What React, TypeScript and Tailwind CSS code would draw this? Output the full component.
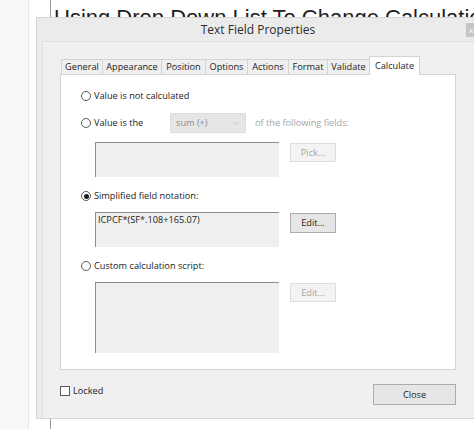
import { ChevronDown } from "lucide-react";

const tabs = [
  { label: "General", w: "w-[42px]" },
  { label: "Appearance", w: "w-[60px]" },
  { label: "Position", w: "w-[45px]" },
  { label: "Options", w: "w-[43px]" },
  { label: "Actions", w: "w-[42px]" },
  { label: "Format", w: "w-[40px]" },
  { label: "Validate", w: "w-[43px]" },
];

function Radio({ checked, label }: { checked?: boolean; label: string }) {
  return (
    <div className="flex items-center h-[16px]">
      <span className="w-[10px] h-[10px] rounded-full border border-[#5b5b5b] bg-white flex items-center justify-center">
        {checked && <span className="w-[5px] h-[5px] rounded-full bg-[#1b1b1b]" />}
      </span>
      <span className="ml-[3px] text-[#1b1b1b]">{label}</span>
    </div>
  );
}

function Box({ h, children }: { h: string; children?: React.ReactNode }) {
  return (
    <div
      className={`w-[184px] ${h} bg-[#efefef] border-t border-l border-[#8c8c8c] px-[2px] text-[#1b1b1b] leading-[14px]`}
    >
      {children}
    </div>
  );
}

function Btn({ label, disabled }: { label: string; disabled?: boolean }) {
  return (
    <div
      className={
        disabled
          ? "ml-[11px] mt-[1px] w-[46px] h-[19px] flex items-center justify-center bg-[#f3f3f3] border border-[#dedede] text-[#a3a3a3]"
          : "ml-[11px] mt-[1px] w-[46px] h-[20px] flex items-center justify-center bg-[#e6e6e6] border border-[#adadad] text-[#1b1b1b]"
      }
    >
      {label}
    </div>
  );
}

export default function App() {
  return (
    <div className="relative w-[474px] h-[429px] bg-white overflow-hidden font-['Open_Sans',sans-serif]">
      <div className="flex h-full">
        <div className="w-[29px] bg-[#f7f7f7] border-r border-[#e6e6e6]" />
        <div className="w-[21px]" />
        <div className="flex-1 border-l border-[#9a9a9a] pl-[3px] overflow-hidden">
          <div className="h-[17px] overflow-hidden pt-[7px]">
            <div className="font-['Liberation_Sans',Arial,sans-serif] text-[22px] leading-[22px] text-[#1e1e1e] whitespace-nowrap">
              Using Drop Down List To Change Calculations
            </div>
          </div>
        </div>
      </div>

      <div className="absolute left-[36px] top-[17px] w-[444px] h-[402px] bg-[#ebebeb] border border-[#d6d6d6] flex flex-col">
        <div className="h-[23px] relative flex items-center justify-center text-[12px] text-[#2b2b2b]">
          Text Field Properties
          <div className="absolute left-[429px] top-[5px] w-[14px] h-[14px] bg-[#c6c6c6] text-white text-[8px] leading-[13px] pl-[3px]">
            x
          </div>
        </div>
        <div className="flex-1 ml-[5px] bg-[#f0f0f0] border-t border-l border-[#e0e0e0] pl-[17px] pt-[14px] text-[9.2px]">
          <div className="flex items-end h-[18px] pl-[1px]">
            {tabs.map((t) => (
              <div
                key={t.label}
                className={`${t.w} h-[15px] flex items-center justify-center bg-[#efefef] border border-b-0 border-[#d4d4d4] -ml-[1px] first:ml-0 text-[#1b1b1b]`}
              >
                {t.label}
              </div>
            ))}
            <div className="w-[51px] h-[19px] -ml-[1px] -mb-[1px] relative z-10 flex items-start pt-[2px] justify-center bg-white border border-b-0 border-[#d4d4d4] text-[#1b1b1b]">
              Calculate
            </div>
          </div>
          <div className="w-[396px] h-[296px] bg-white border border-[#d4d4d4] pl-[20px] pt-[13px]">
            <Radio label="Value is not calculated" />
            <div className="flex items-center h-[20px] mt-[9px]">
              <div className="w-[89px]">
                <Radio label="Value is the" />
              </div>
              <div className="w-[76px] h-[20px] bg-[#e6e6e6] border border-[#dcdcdc] flex items-center justify-between pl-[5px] pr-[4px] text-[#8a8a8a]">
                <span>sum (+)</span>
                <ChevronDown className="w-[9px] h-[9px] text-[#a8a8a8]" strokeWidth={1.5} />
              </div>
              <span className="ml-[9px] text-[#a5a5a5]">of the following fields:</span>
            </div>
            <div className="flex items-start mt-[9px] ml-[14px]">
              <Box h="h-[35px]" />
              <Btn label="Pick..." disabled />
            </div>
            <div className="mt-[11px]">
              <Radio checked label="Simplified field notation:" />
            </div>
            <div className="flex items-start mt-[8px] ml-[14px]">
              <Box h="h-[35px]">ICPCF*(SF*.108+165.07)</Box>
              <Btn label="Edit..." />
            </div>
            <div className="mt-[11px]">
              <Radio label="Custom calculation script:" />
            </div>
            <div className="flex items-start mt-[8px] ml-[14px]">
              <Box h="h-[71px]" />
              <Btn label="Edit..." disabled />
            </div>
          </div>
          <div className="flex items-start justify-between w-[396px] mt-[14px]">
            <div className="flex items-center mt-[1px] h-[12px]">
              <span className="w-[10px] h-[10px] border border-[#5b5b5b] bg-white" />
              <span className="ml-[3px] text-[#1b1b1b]">Locked</span>
            </div>
            <div className="w-[83px] h-[21px] bg-[#e6e6e6] border border-[#acacac] flex items-center justify-center text-[#1b1b1b]">
              Close
            </div>
          </div>
        </div>
      </div>
    </div>
  );
}
